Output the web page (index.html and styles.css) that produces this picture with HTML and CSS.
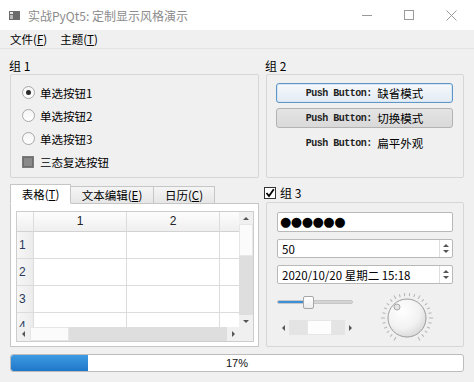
FILE: index.html
```html
<!DOCTYPE html>
<html lang="zh-CN">
<head>
    <meta charset="UTF-8">
    <title>实战PyQt5: 定制显示风格演示</title>
    <link rel="stylesheet" href="styles.css">
</head>
<body>
    <!-- Title bar -->
    <div class="titlebar">
        <svg class="app-icon" width="11" height="9" viewBox="0 0 11 9">
            <rect x="0" y="0" width="11" height="9" fill="#6a6a6a"/>
            <rect x="1" y="1" width="3" height="2" fill="#e8e8e8"/>
            <rect x="1" y="4" width="3" height="4" fill="#b8b8b8"/>
        </svg>
        <span class="title">实战PyQt5: 定制显示风格演示</span>
        <div class="win-controls">
            <span class="ctl">
                <svg width="10" height="10" viewBox="0 0 10 10"><line x1="0" y1="5.5" x2="10" y2="5.5" stroke="#9a9a9a" stroke-width="1"/></svg>
            </span>
            <span class="ctl">
                <svg width="10" height="10" viewBox="0 0 10 10"><rect x="0.5" y="0.5" width="9" height="9" fill="none" stroke="#9a9a9a" stroke-width="1"/></svg>
            </span>
            <span class="ctl">
                <svg width="11" height="11" viewBox="0 0 11 11"><path d="M0.5 0.5 L10.5 10.5 M10.5 0.5 L0.5 10.5" stroke="#9a9a9a" stroke-width="1"/></svg>
            </span>
        </div>
    </div>

    <!-- Menu bar -->
    <div class="menubar">
        <span class="menu">文件(<u>F</u>)</span>
        <span class="menu">主题(<u>T</u>)</span>
    </div>

    <div class="content">
        <div class="panels">
            <!-- Group 1: radio buttons -->
            <section class="group">
                <div class="group-title">组 1</div>
                <div class="group-frame radios">
                    <div class="option"><span class="radio checked"></span>单选按钮1</div>
                    <div class="option"><span class="radio"></span>单选按钮2</div>
                    <div class="option"><span class="radio"></span>单选按钮3</div>
                    <div class="option"><span class="tristate"></span>三态复选按钮</div>
                </div>
            </section>

            <!-- Group 2: push buttons -->
            <section class="group">
                <div class="group-title">组 2</div>
                <div class="group-frame buttons">
                    <div class="push default"><span class="mono">Push Button: </span>缺省模式</div>
                    <div class="push toggled"><span class="mono">Push Button: </span>切换模式</div>
                    <div class="push flat"><span class="mono">Push Button: </span>扁平外观</div>
                </div>
            </section>

            <!-- Tab widget with table -->
            <section class="tabwidget">
                <div class="tabbar">
                    <div class="tab active tab-table">表格(<u>T</u>)</div>
                    <div class="tab tab-edit">文本编辑(<u>E</u>)</div>
                    <div class="tab tab-cal">日历(<u>C</u>)</div>
                </div>
                <div class="tabpane">
                    <div class="table">
                        <div class="viewport">
                            <div class="trow thead">
                                <div class="cell corner"></div>
                                <div class="cell hcell">1</div>
                                <div class="cell hcell">2</div>
                                <div class="cell hcell"></div>
                            </div>
                            <div class="trow">
                                <div class="cell rhead">1</div>
                                <div class="cell"></div><div class="cell"></div><div class="cell"></div>
                            </div>
                            <div class="trow">
                                <div class="cell rhead">2</div>
                                <div class="cell"></div><div class="cell"></div><div class="cell"></div>
                            </div>
                            <div class="trow">
                                <div class="cell rhead">3</div>
                                <div class="cell"></div><div class="cell"></div><div class="cell"></div>
                            </div>
                            <div class="trow">
                                <div class="cell rhead">4</div>
                                <div class="cell"></div><div class="cell"></div><div class="cell"></div>
                            </div>
                        </div>
                        <div class="vscroll">
                            <div class="sb-btn"><span class="arrow up"></span></div>
                            <div class="sb-thumb v-thumb"></div>
                            <div class="sb-track"></div>
                            <div class="sb-btn"><span class="arrow down"></span></div>
                        </div>
                        <div class="hscroll">
                            <div class="sb-btn h-btn"><span class="arrow left"></span></div>
                            <div class="sb-thumb h-thumb"></div>
                            <div class="sb-track"></div>
                            <div class="sb-btn h-btn"><span class="arrow right"></span></div>
                        </div>
                        <div class="sb-corner"></div>
                    </div>
                </div>
            </section>

            <!-- Group 3: checkable, inputs -->
            <section class="group group3">
                <div class="group-title checkable">
                    <span class="checkbox">
                        <svg width="10" height="10" viewBox="0 0 10 10"><path d="M1.5 5 L4 8 L8.8 1.2" fill="none" stroke="#000" stroke-width="1.8"/></svg>
                    </span>组 3
                </div>
                <div class="group-frame fields">
                    <div class="field password">●●●●●●</div>
                    <div class="field spin">
                        <span class="spin-text">50</span>
                        <span class="spin-btns"><span class="arrow up"></span><span class="arrow down"></span></span>
                    </div>
                    <div class="field spin">
                        <span class="spin-text">2020/10/20 星期二 15:18</span>
                        <span class="spin-btns"><span class="arrow up"></span><span class="arrow down"></span></span>
                    </div>
                    <div class="controls">
                        <div class="sliders">
                            <div class="slider">
                                <div class="groove"><div class="groove-fill"></div></div>
                                <div class="handle"></div>
                            </div>
                            <div class="mini-scroll">
                                <div class="sb-btn m-btn"><span class="arrow left"></span></div>
                                <div class="sb-track m-track1"></div>
                                <div class="sb-thumb m-thumb"></div>
                                <div class="sb-track m-track2"></div>
                                <div class="sb-btn m-btn"><span class="arrow right"></span></div>
                            </div>
                        </div>
                        <svg class="dial" width="56" height="56" viewBox="0 0 56 56">
                            <defs>
                                <radialGradient id="knob" cx="0.38" cy="0.32" r="0.75">
                                    <stop offset="0" stop-color="#ffffff"/>
                                    <stop offset="0.6" stop-color="#f2f2f2"/>
                                    <stop offset="1" stop-color="#d6d6d6"/>
                                </radialGradient>
                            </defs>
                            <g stroke="#b4b4b4" stroke-width="1">
                                <line x1="28" y1="2" x2="28" y2="6" transform="rotate(-150 28 28)"/>
                                <line x1="28" y1="3" x2="28" y2="6" transform="rotate(-138 28 28)"/>
                                <line x1="28" y1="3" x2="28" y2="6" transform="rotate(-126 28 28)"/>
                                <line x1="28" y1="3" x2="28" y2="6" transform="rotate(-114 28 28)"/>
                                <line x1="28" y1="3" x2="28" y2="6" transform="rotate(-102 28 28)"/>
                                <line x1="28" y1="2" x2="28" y2="6" transform="rotate(-90 28 28)"/>
                                <line x1="28" y1="3" x2="28" y2="6" transform="rotate(-78 28 28)"/>
                                <line x1="28" y1="3" x2="28" y2="6" transform="rotate(-66 28 28)"/>
                                <line x1="28" y1="3" x2="28" y2="6" transform="rotate(-54 28 28)"/>
                                <line x1="28" y1="3" x2="28" y2="6" transform="rotate(-42 28 28)"/>
                                <line x1="28" y1="2" x2="28" y2="6" transform="rotate(-30 28 28)"/>
                                <line x1="28" y1="3" x2="28" y2="6" transform="rotate(-18 28 28)"/>
                                <line x1="28" y1="3" x2="28" y2="6" transform="rotate(-6 28 28)"/>
                                <line x1="28" y1="3" x2="28" y2="6" transform="rotate(6 28 28)"/>
                                <line x1="28" y1="3" x2="28" y2="6" transform="rotate(18 28 28)"/>
                                <line x1="28" y1="2" x2="28" y2="6" transform="rotate(30 28 28)"/>
                                <line x1="28" y1="3" x2="28" y2="6" transform="rotate(42 28 28)"/>
                                <line x1="28" y1="3" x2="28" y2="6" transform="rotate(54 28 28)"/>
                                <line x1="28" y1="3" x2="28" y2="6" transform="rotate(66 28 28)"/>
                                <line x1="28" y1="3" x2="28" y2="6" transform="rotate(78 28 28)"/>
                                <line x1="28" y1="2" x2="28" y2="6" transform="rotate(90 28 28)"/>
                                <line x1="28" y1="3" x2="28" y2="6" transform="rotate(102 28 28)"/>
                                <line x1="28" y1="3" x2="28" y2="6" transform="rotate(114 28 28)"/>
                                <line x1="28" y1="3" x2="28" y2="6" transform="rotate(126 28 28)"/>
                                <line x1="28" y1="3" x2="28" y2="6" transform="rotate(138 28 28)"/>
                                <line x1="28" y1="2" x2="28" y2="6" transform="rotate(150 28 28)"/>
                            </g>
                            <circle cx="28" cy="28" r="19" fill="url(#knob)" stroke="#9c9c9c" stroke-width="1"/>
                            <circle cx="18" cy="17" r="3" fill="#e4e4e4" stroke="#a8a8a8" stroke-width="1"/>
                        </svg>
                    </div>
                </div>
            </section>
        </div>

        <!-- Progress bar -->
        <div class="progress">
            <div class="progress-fill" style="width: 17%"></div>
            <div class="progress-text">17%</div>
        </div>
    </div>
</body>
</html>
```

FILE: styles.css
```css
* {
    box-sizing: border-box;
    margin: 0;
    padding: 0;
}

body {
    width: 474px;
    height: 382px;
    overflow: hidden;
    background: #f0f0f0;
    font-family: "Noto Sans CJK SC", sans-serif;
    font-size: 11px;
    color: #000;
}

u {
    text-decoration: underline;
    text-underline-offset: 1px;
}

/* Title bar */
.titlebar {
    height: 30px;
    background: #fff;
    display: flex;
    align-items: center;
    padding-left: 9px;
}

.app-icon {
    margin-right: 8px;
}

.title {
    flex: 1;
    font-size: 12px;
    color: #8c8c8c;
}

.win-controls {
    display: flex;
    height: 30px;
    padding-right: 2px;
}

.ctl {
    width: 42px;
    display: flex;
    align-items: center;
    justify-content: center;
}

/* Menu bar */
.menubar {
    height: 19px;
    display: flex;
    align-items: center;
    gap: 13px;
    padding-left: 10px;
    background: #f0f0f0;
    border-bottom: 1px solid #e3e3e3;
    font-size: 11.5px;
}

/* Main area */
.content {
    padding: 8px 10px 10px;
}

.panels {
    display: grid;
    grid-template-columns: 249px 198px;
    grid-template-rows: 121px 164px;
    column-gap: 7px;
    row-gap: 5px;
}

.group {
    display: flex;
    flex-direction: column;
    min-height: 0;
}

.group-title {
    height: 17px;
    line-height: 17px;
    font-size: 12px;
    margin-left: -1px;
}

.group-frame {
    flex: 1;
    min-height: 0;
    border: 1px solid #d6d6d6;
    border-radius: 2px;
}

/* Group 1 */
.radios {
    padding: 6px 0 0 11px;
}

.option {
    height: 23px;
    display: flex;
    align-items: center;
    font-size: 11.5px;
}

.radio {
    width: 13px;
    height: 13px;
    border: 1px solid #a8a8a8;
    border-radius: 50%;
    background: linear-gradient(#f4f4f4, #ffffff);
    margin-right: 5px;
    display: flex;
    align-items: center;
    justify-content: center;
}

.radio.checked::after {
    content: "";
    width: 5px;
    height: 5px;
    border-radius: 50%;
    background: #2a2a2a;
}

.tristate {
    width: 12px;
    height: 12px;
    border: 1px solid #7c7c7c;
    background: #fff;
    margin-right: 6px;
    display: flex;
    align-items: center;
    justify-content: center;
}

.tristate::after {
    content: "";
    width: 8px;
    height: 8px;
    background: #8a8a8a;
    border: 1px solid #6e6e6e;
}

/* Group 2 */
.buttons {
    padding: 8px 10px 0 9px;
    display: flex;
    flex-direction: column;
    gap: 5px;
}

.push {
    height: 20px;
    display: flex;
    align-items: center;
    justify-content: center;
    font-size: 11.5px;
    border-radius: 3px;
}

.push .mono {
    font-family: "Liberation Mono", monospace;
    font-size: 10px;
    font-weight: bold;
    letter-spacing: -0.5px;
    white-space: pre;
    color: #222;
}

.push.default {
    border: 1px solid #5f96c8;
    background: linear-gradient(#f6f9fc, #e3ebf4);
    box-shadow: inset 0 0 0 1px #d6e6f5;
}

.push.toggled {
    border: 1px solid #b3b3b3;
    background: linear-gradient(#e4e4e4, #d9d9d9);
}

/* Tabs */
.tabwidget {
    display: flex;
    flex-direction: column;
    min-height: 0;
}

.tabbar {
    height: 21px;
    flex: none;
    display: flex;
    align-items: flex-end;
    margin-bottom: -1px;
    position: relative;
    z-index: 1;
}

.tab {
    height: 18px;
    line-height: 16px;
    text-align: center;
    border: 1px solid #c6c6c6;
    background: linear-gradient(#f5f5f5, #e6e6e6);
    margin-left: -1px;
    font-size: 11.5px;
}

.tab.active {
    height: 20px;
    line-height: 18px;
    background: #fff;
    border-bottom-color: #fff;
    margin-left: 0;
    position: relative;
    z-index: 2;
}

.tab-table { width: 61px; }
.tab-edit { width: 84px; }
.tab-cal { width: 62px; }

.tabpane {
    flex: 1;
    min-height: 0;
    border: 1px solid #c6c6c6;
    background: #fff;
    padding: 7px 4px 4px 5px;
}

/* Table */
.table {
    height: 100%;
    border: 1px solid #cdcdcd;
    display: grid;
    grid-template-columns: minmax(0, 1fr) 14px;
    grid-template-rows: minmax(0, 1fr) 14px;
}

.viewport {
    overflow: hidden;
    min-height: 0;
}

.trow {
    display: grid;
    grid-template-columns: 17px 93px 93px 93px;
    height: 27px;
}

.trow.thead {
    height: 20px;
}

.cell {
    border-right: 1px solid #dcdcdc;
    border-bottom: 1px solid #dcdcdc;
    background: #fff;
}

.thead .cell {
    background: linear-gradient(#fdfdfd, #efefef);
    border-bottom-color: #d2d2d2;
    text-align: center;
    line-height: 19px;
    font-family: "Liberation Sans", sans-serif;
    font-size: 12px;
    color: #222;
}

.rhead {
    background: linear-gradient(90deg, #f6f6f6, #ececec);
    font-family: "Liberation Sans", sans-serif;
    font-size: 12px;
    line-height: 26px;
    padding-left: 2px;
    color: #283a5c;
}

.vscroll {
    display: grid;
    grid-template-rows: 12px 32px minmax(0, 1fr) 12px;
    background: #f0f0f0;
    min-height: 0;
}

.hscroll {
    display: grid;
    grid-template-columns: 13px 39px minmax(0, 1fr) 12px;
    background: #f0f0f0;
}

.sb-btn {
    background: #f0f0f0;
    display: flex;
    align-items: center;
    justify-content: center;
}

.sb-thumb {
    background: #fbfbfb;
    border: 1px solid #e6e6e6;
}

.sb-track {
    background: #dedede;
}

.sb-corner {
    background: #f0f0f0;
}

.arrow {
    width: 0;
    height: 0;
    border: 3px solid transparent;
}

.arrow.up {
    border-bottom: 3px solid #555;
    border-top-width: 0;
}

.arrow.down {
    border-top: 3px solid #555;
    border-bottom-width: 0;
}

.arrow.left {
    border-right: 3px solid #555;
    border-left-width: 0;
}

.arrow.right {
    border-left: 3px solid #555;
    border-right-width: 0;
}

/* Group 3 */
.checkable {
    height: 19px;
    line-height: 19px;
    margin-left: -2px;
    display: flex;
    align-items: center;
}

.checkbox {
    width: 12px;
    height: 12px;
    border: 1px solid #333;
    background: #fff;
    margin-right: 4px;
    display: flex;
    align-items: center;
    justify-content: center;
}

.fields {
    padding: 9px 10px 0 10px;
    display: flex;
    flex-direction: column;
}

.field {
    height: 19px;
    flex: none;
    border: 1px solid #b8b8b8;
    border-radius: 2px;
    background: #fff;
    display: flex;
    align-items: center;
    margin-bottom: 7px;
}

.password {
    height: 20px;
    padding-left: 2px;
    font-family: "DejaVu Sans", sans-serif;
    font-size: 13px;
    letter-spacing: -0.5px;
    line-height: 18px;
}

.spin {
    justify-content: space-between;
}

.spin-text {
    padding-left: 4px;
    font-size: 11.5px;
}

.spin-btns {
    width: 13px;
    height: 100%;
    border-left: 1px solid #dedede;
    display: flex;
    flex-direction: column;
    align-items: center;
    justify-content: center;
    gap: 3px;
}

.controls {
    display: flex;
    margin-top: -1px;
}

.sliders {
    width: 78px;
}

.slider {
    height: 24px;
    display: flex;
    align-items: center;
    position: relative;
}

.groove {
    width: 76px;
    height: 4px;
    border-radius: 2px;
    background: #d4d4d4;
    border: 1px solid #c6c6c6;
    overflow: hidden;
}

.groove-fill {
    width: 27px;
    height: 100%;
    background: #3b8fd6;
}

.handle {
    position: absolute;
    left: 26px;
    top: 6px;
    width: 11px;
    height: 13px;
    background: linear-gradient(#ffffff, #ececec);
    border: 1px solid #a6a6a6;
    border-radius: 2px;
}

.mini-scroll {
    margin-top: 6px;
    height: 15px;
    display: grid;
    grid-template-columns: 12px 18px 25px 13px 1fr;
    background: #f0f0f0;
}

.m-track1,
.m-track2 {
    background: #e4e4e4;
}

.m-thumb {
    background: #fdfdfd;
}

.dial {
    margin-left: 24px;
}

/* Progress bar */
.progress {
    margin-top: 7px;
    height: 18px;
    border: 1px solid #bcbcbc;
    border-radius: 3px;
    background: #fff;
    display: grid;
    overflow: hidden;
}

.progress-fill,
.progress-text {
    grid-area: 1 / 1;
}

.progress-fill {
    background: linear-gradient(#3e9ae2, #1f78c8);
    border-radius: 2px 0 0 2px;
}

.progress-text {
    text-align: center;
    line-height: 16px;
    font-family: "Liberation Sans", sans-serif;
    font-size: 11px;
    color: #111;
}
```
